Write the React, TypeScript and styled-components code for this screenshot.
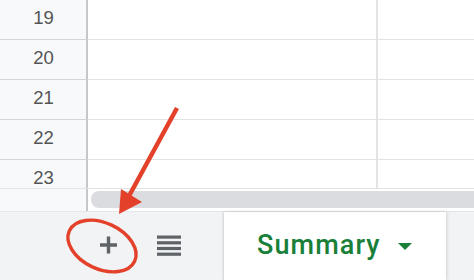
import React from "react";
import styled, { createGlobalStyle } from "styled-components";

const Global = createGlobalStyle`
  html, body { margin: 0; padding: 0; background: #ffffff; }
  body { font-family: Roboto, "Liberation Sans", Arial, sans-serif; }
`;

const Page = styled.div`
  position: relative;
  width: 474px;
  height: 280px;
  overflow: hidden;
  background: #ffffff;
  display: flex;
  flex-direction: column;
`;

const Grid = styled.div`
  height: 188px;
  overflow: hidden;
  display: flex;
  flex-direction: column;
`;

const Row = styled.div`
  flex: 0 0 40px;
  display: grid;
  grid-template-columns: 88px 290px 1fr;
`;

const RowHeader = styled.div`
  background: #f8f9fa;
  border-right: 2px solid #c7c7c7;
  border-bottom: 1px solid #d4d6d8;
  display: flex;
  align-items: center;
  justify-content: center;
  font-family: "Liberation Sans", Arial, sans-serif;
  font-size: 18.5px;
  color: #545454;
  box-sizing: border-box;
  padding-left: 1px;
  padding-bottom: 3px;
`;

const Cell = styled.div<{ $last?: boolean }>`
  border-bottom: 1px solid #e2e3e3;
  border-right: ${(p) => (p.$last ? "none" : "2px solid #e2e3e3")};
  box-sizing: border-box;
`;

const ScrollRow = styled.div`
  flex: 0 0 23px;
  display: grid;
  grid-template-columns: 88px 1fr;
  border-top: 1px solid #e2e3e3;
  box-sizing: border-box;
`;

const ScrollStub = styled.div`
  background: #f8f9fa;
  border-right: 2px solid #c7c7c7;
`;

const Track = styled.div`
  background: #ffffff;
  padding: 2px 0 3px 3px;
  display: flex;
`;

const Thumb = styled.div`
  flex: 1;
  background: #dadce0;
  border-radius: 8px 0 0 8px;
`;

const BottomBar = styled.div`
  flex: 1;
  background: #f1f3f4;
  border-top: 1px solid #e6e7e8;
  display: flex;
  align-items: stretch;
  padding-left: 92px;
`;

const IconButton = styled.div<{ $w: number; $mr: number }>`
  width: ${(p) => p.$w}px;
  margin-right: ${(p) => p.$mr}px;
  display: flex;
  align-items: center;
  justify-content: center;
  padding-bottom: 2px;
`;

const Tab = styled.div`
  width: 222px;
  background: #ffffff;
  box-shadow: -1px 0 2px rgba(60, 64, 67, 0.15), 1px 0 3px rgba(60, 64, 67, 0.18);
  display: flex;
  align-items: center;
  padding-left: 33px;
  box-sizing: border-box;
  gap: 17px;
`;

const TabLabel = styled.span`
  font-family: Roboto, "Liberation Sans", Arial, sans-serif;
  font-weight: 500;
  font-size: 27px;
  color: #188038;
  letter-spacing: 1.1px;
  padding-bottom: 2px;
`;

const Caret = styled.span`
  width: 0;
  height: 0;
  border-left: 7px solid transparent;
  border-right: 7px solid transparent;
  border-top: 7px solid #188038;
  margin-top: 1px;
`;

const Filler = styled.div`
  flex: 1;
`;

const Overlay = styled.svg`
  position: absolute;
  left: 0;
  top: 0;
  pointer-events: none;
`;

const rows = [19, 20, 21, 22, 23];

export default function App() {
  return (
    <>
      <Global />
      <Page>
        <Grid>
          {rows.map((n) => (
            <Row key={n}>
              <RowHeader>{n}</RowHeader>
              <Cell />
              <Cell $last />
            </Row>
          ))}
        </Grid>
        <ScrollRow>
          <ScrollStub />
          <Track>
            <Thumb />
          </Track>
        </ScrollRow>
        <BottomBar>
          <IconButton $w={32} $mr={26}>
            <svg width="19" height="18" viewBox="0 0 19 18">
              <path d="M9.5 0.5v17M1 9h17" stroke="#5f6368" strokeWidth="3.4" />
            </svg>
          </IconButton>
          <IconButton $w={38} $mr={36}>
            <svg width="24" height="21" viewBox="0 0 24 21">
              <rect x="0" y="0.5" width="24" height="3.2" fill="#5f6368" />
              <rect x="0" y="6.2" width="24" height="3.2" fill="#5f6368" />
              <rect x="0" y="11.9" width="24" height="3.2" fill="#5f6368" />
              <rect x="0" y="17.6" width="24" height="3.2" fill="#5f6368" />
            </svg>
          </IconButton>
          <Tab>
            <TabLabel>Summary</TabLabel>
            <Caret />
          </Tab>
          <Filler />
        </BottomBar>
        <Overlay width="474" height="280" viewBox="0 0 474 280">
          <line x1="177" y1="108" x2="129" y2="196" stroke="#e4412b" strokeWidth="4.5" strokeLinecap="butt" />
          <polygon points="119,214 121,189 142,202" fill="#e4412b" />
          <ellipse
            cx="102"
            cy="246"
            rx="36"
            ry="23"
            transform="rotate(25 102 246)"
            fill="none"
            stroke="#e4412b"
            strokeWidth="3.4"
          />
        </Overlay>
      </Page>
    </>
  );
}
